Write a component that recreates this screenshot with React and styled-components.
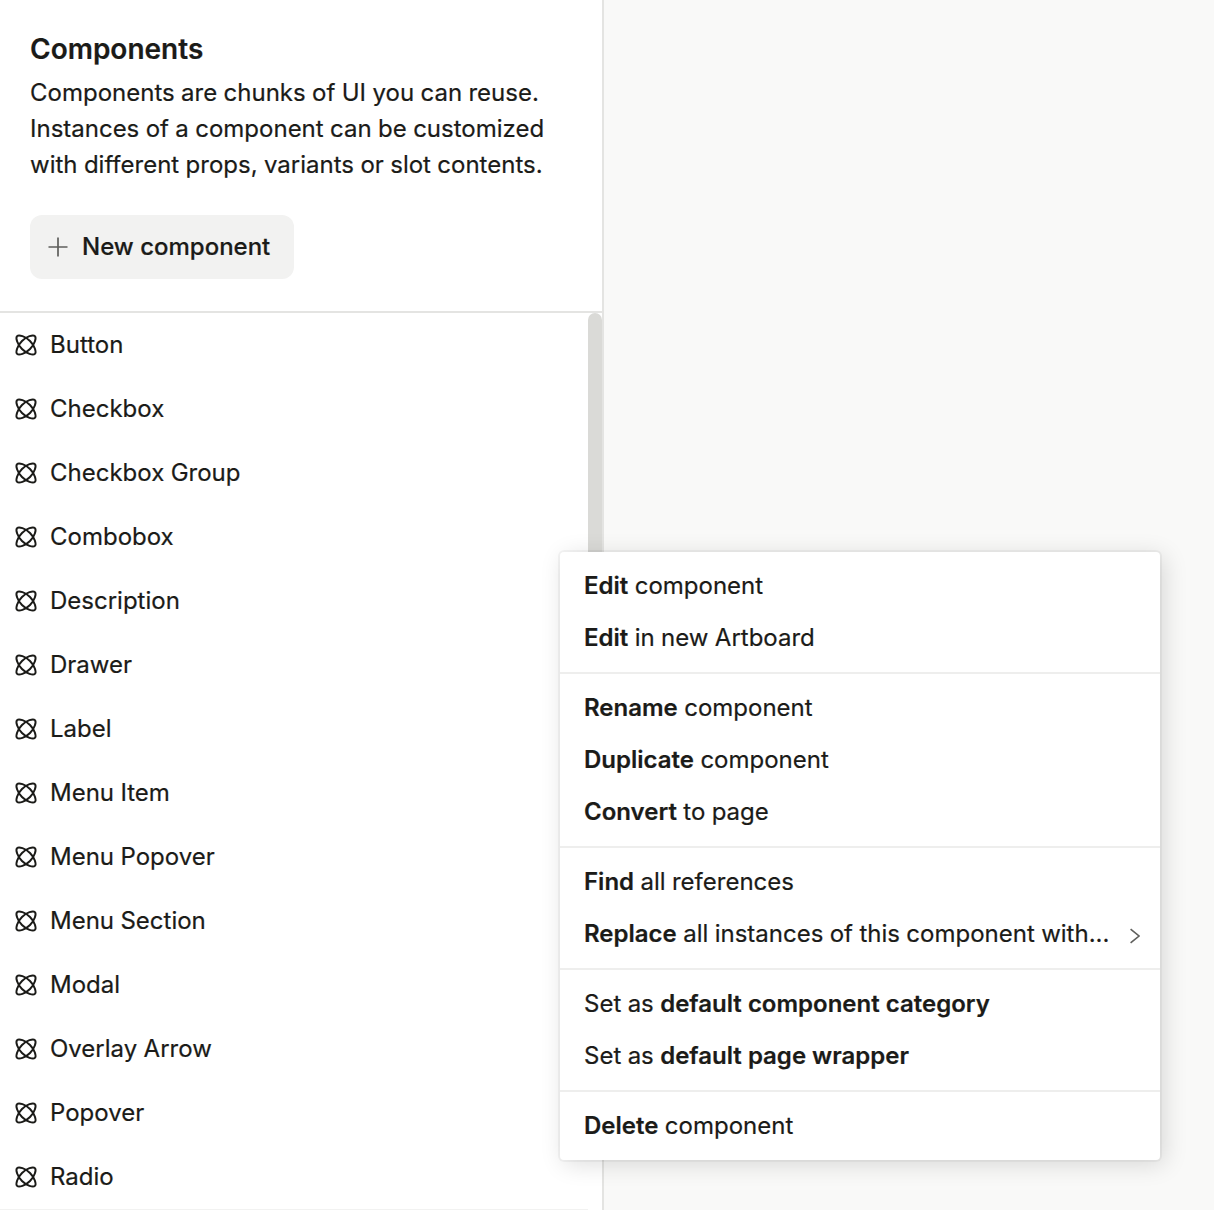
import React from "react";
import styled, { createGlobalStyle } from "styled-components";

const components = [
    "Button",
    "Checkbox",
    "Checkbox Group",
    "Combobox",
    "Description",
    "Drawer",
    "Label",
    "Menu Item",
    "Menu Popover",
    "Menu Section",
    "Modal",
    "Overlay Arrow",
    "Popover",
    "Radio",
]

const menuGroups = [
    [
        <><b>Edit</b> component</>,
        <><b>Edit</b> in new Artboard</>,
    ],
    [
        <><b>Rename</b> component</>,
        <><b>Duplicate</b> component</>,
        <><b>Convert</b> to page</>,
    ],
    [
        <><b>Find</b> all references</>,
        <><b>Replace</b> all instances of this component with...</>,
    ],
    [
        <>Set as <b>default component category</b></>,
        <>Set as <b>default page wrapper</b></>,
    ],
    [
        <><b>Delete</b> component</>,
    ],
]

const ComponentIcon = () => (
    <svg width="24" height="24" viewBox="0 0 24 24" fill="none" stroke="currentColor" strokeWidth="2">
        <path d="M20.9 20.9C22.7 19.1 20.6 12.6 16 8C11.4 3.4 4.9 1.3 3.1 3.1C1.3 4.9 3.4 11.4 8 16C12.6 20.6 19.1 22.7 20.9 20.9Z" />
        <path d="M20.9 3.1C22.7 4.9 20.6 11.4 16 16C11.4 20.6 4.9 22.7 3.1 20.9C1.3 19.1 3.4 12.6 8 8C12.6 3.4 19.1 1.3 20.9 3.1Z" />
    </svg>
)

const PlusIcon = () => (
    <svg width="20" height="20" viewBox="0 0 20 20" fill="none" stroke="#5f5f5c" strokeWidth="1.7">
        <path d="M10 0.5V19.5M0.5 10H19.5" />
    </svg>
)

const ChevronIcon = () => (
    <svg width="10" height="16" viewBox="0 0 10 16" fill="none" stroke="#5f5f5c" strokeWidth="1.6">
        <path d="M0.6 1.2L9 8L0.6 14.8" />
    </svg>
)

export default function App() {
    return (
        <>
            <GlobalStyle />
            <Page>
                <Panel>
                    <PanelHeader>
                        <h1>Components</h1>
                        <p>
                            Components are chunks of UI you can reuse. Instances of a component can be
                            customized with different props, variants or slot contents.
                        </p>
                        <NewButton>
                            <PlusIcon />
                            New component
                        </NewButton>
                    </PanelHeader>
                    <List>
                        {components.map((name) => (
                            <ListItem key={name}>
                                <ComponentIcon />
                                {name}
                            </ListItem>
                        ))}
                        <ScrollThumb />
                    </List>
                </Panel>
                <ContextMenu>
                    {menuGroups.map((items, i) => (
                        <MenuGroup key={i}>
                            {items.map((item, j) => {
                                const hasSubmenu = i === 2 && j === 1
                                return (
                                    <MenuItem key={j}>
                                        <span>{item}</span>
                                        {hasSubmenu && <ChevronIcon />}
                                    </MenuItem>
                                )
                            })}
                        </MenuGroup>
                    ))}
                </ContextMenu>
            </Page>
        </>
    )
}

const GlobalStyle = createGlobalStyle`
    * {
        box-sizing: border-box;
        margin: 0;
        padding: 0;
    }
    body {
        background: #f9f9f8;
        color: #1b1b18;
        font-family: Inter, sans-serif;
        font-size: 24px;
        line-height: 36px;
        word-spacing: -0.35px;
        -webkit-text-stroke: 0.2px currentColor;
        overflow: hidden;
    }
`;

const Page = styled.div`
    position: relative;
    display: flex;
    height: 1210px;
    overflow: hidden;
`;

const Panel = styled.aside`
    display: flex;
    flex-direction: column;
    width: 604px;
    background: #fff;
    border-right: 2px solid #e4e4e2;
`;

const PanelHeader = styled.header`
    flex: none;
    height: 313px;
    padding: 31px 30px 0;
    border-bottom: 2px solid #e4e4e2;

    h1 {
        font-size: 28px;
        font-weight: 600;
        line-height: 36px;
        margin-bottom: 8px;
    }
`;

const NewButton = styled.button`
    display: flex;
    align-items: center;
    gap: 14px;
    width: 264px;
    height: 64px;
    margin-top: 32px;
    padding: 0 18px;
    border: none;
    border-radius: 12px;
    background: #f2f2f1;
    color: inherit;
    font: inherit;
    font-weight: 500;
    white-space: nowrap;
`;

const List = styled.ul`
    position: relative;
    flex: 1;
    list-style: none;
`;

const ListItem = styled.li`
    display: flex;
    align-items: center;
    gap: 12px;
    height: 64px;
    padding-left: 14px;

    &:nth-child(14) {
        height: 66px;
        margin-right: 14px;
        border-bottom: 2px solid #f2f2f1;
    }
`;

const ScrollThumb = styled.div`
    position: absolute;
    top: 0;
    right: 0;
    width: 14px;
    height: 420px;
    border-radius: 7px;
    background: #dadad7;
`;

const ContextMenu = styled.div`
    position: absolute;
    top: 552px;
    left: 560px;
    width: 600px;
    border-radius: 4px;
    background: #fff;
    box-shadow: 0 0 0 2px rgba(0, 0, 0, 0.04), 4px 4px 24px rgba(0, 0, 0, 0.14);
`;

const MenuGroup = styled.div`
    padding: 8px 0;

    & + & {
        border-top: 2px solid #eeeeed;
    }
`;

const MenuItem = styled.div`
    display: flex;
    align-items: center;
    justify-content: space-between;
    height: 52px;
    padding: 0 20px 0 24px;
    white-space: nowrap;

    b {
        font-weight: 600;
        word-spacing: 0;
    }
    svg {
        margin-top: 4px;
    }
`;
